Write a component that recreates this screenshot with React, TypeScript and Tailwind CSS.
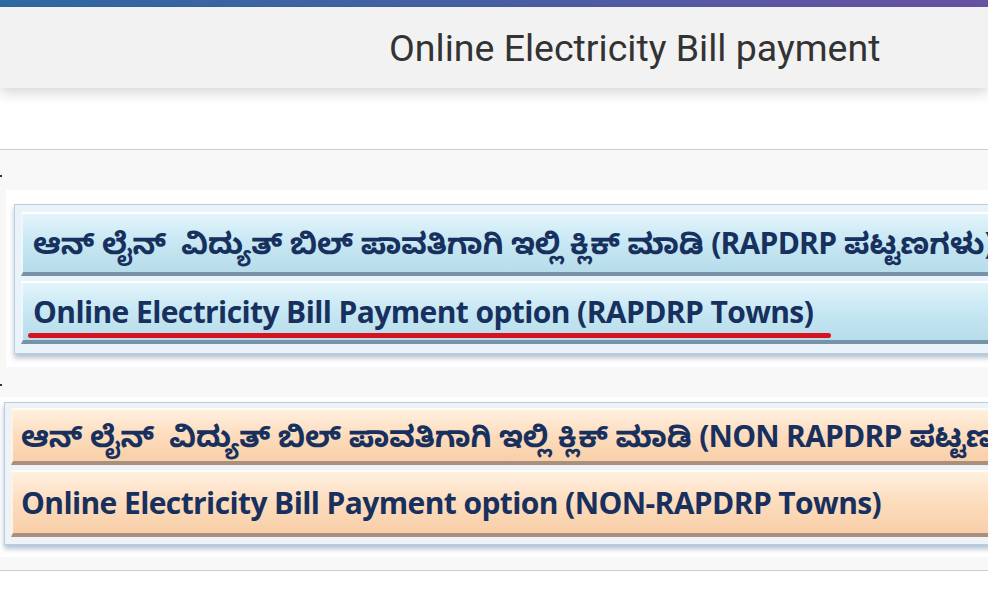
import type { ReactNode } from "react"

const FONT = { fontFamily: "'Open Sans', 'Noto Sans Kannada', 'Noto Sans', sans-serif" }

function Dot() {
  return <div className="w-[2px] h-[2px] bg-[#333]" />
}

function Banner({
  tone,
  kannada,
  english,
  underline,
}: {
  tone: "blue" | "peach"
  kannada: ReactNode
  english: string
  underline?: boolean
}) {
  const btn =
    tone === "blue"
      ? "bg-gradient-to-b from-[#e3f4fb] via-[#c6e7f3] to-[#b7dcea] border-t-2 border-l-2 border-t-white border-l-[#eef8fc] border-b-[4px] border-r-[3px] border-b-[#7693a8] border-r-[#8ba7ba]"
      : "bg-gradient-to-b from-[#fff0e0] via-[#fddcbd] to-[#f8cfa8] border-t-2 border-l-2 border-t-[#fffaf3] border-l-[#fff2e3] border-b-[4px] border-r-[3px] border-b-[#a8907c] border-r-[#b9a08c]"
  const frame =
    tone === "blue"
      ? "bg-[#eaf3f9] border border-[#b8d0e2] shadow-[0_4px_5px_rgba(90,120,150,0.45)] pt-[7px] pb-[9px] pl-[6px]"
      : "bg-[#eef3f8] border border-[#b8cde0] shadow-[0_4px_5px_rgba(90,120,150,0.45)] pt-[5px] pb-[7px] pl-[6px]"
  return (
    <div className={`flex flex-col gap-[5px] w-[1100px] ${frame}`}>
      <div className={`${btn} ${tone === "blue" ? "h-[64px] pl-[10px]" : "h-[57px] pl-[8px]"} flex items-center`}>
        <span className="text-[29.6px] font-bold text-[#17305e] whitespace-pre leading-none" style={FONT}>
          {kannada}
        </span>
      </div>
      <div
        className={`${btn} ${
          tone === "blue" ? "h-[63px] pl-[10px] justify-end pb-[2px]" : "h-[67px] pl-[8px] justify-center"
        } flex flex-col`}
      >
        <span className="text-[30px] font-bold tracking-[-0.02em] text-[#17305e] whitespace-nowrap leading-[34px]" style={FONT}>
          {english}
        </span>
        {underline && <div className="h-[5px] w-[803px] -ml-[5px] mt-[4px] rounded-full bg-[#d8131f]" />}
      </div>
    </div>
  )
}

function Latin({ children }: { children: ReactNode }) {
  return <span className="text-[30px] tracking-[-0.025em]">{children}</span>
}

export default function App() {
  return (
    <div className="w-[988px] h-[589px] overflow-hidden bg-white" style={{ fontFamily: "Roboto, sans-serif" }}>
      <div className="h-[7px] bg-gradient-to-r from-[#2f6aa0] via-[#4760a4] to-[#6a52a3]" />
      <div className="h-[81px] bg-[#f2f2f2] shadow-[0_5px_12px_rgba(0,0,0,0.16)] flex items-center pl-[389px] relative z-10">
        <h1 className="text-[37.5px] text-[#333] leading-none pt-[3px]">Online Electricity Bill payment</h1>
      </div>
      <div className="h-[61px]" />
      <div className="border-t border-b border-[#cfcfcf] bg-[#f8f8f8] h-[422px] flex flex-col">
        <div className="h-[40px] flex items-start pt-[25px]">
          <Dot />
        </div>
        <div className="ml-[6px] bg-white pt-[14px] pb-[13px] pl-[8px]">
          <Banner
            tone="blue"
            kannada={
              <>
                ಆನ್ ಲೈನ್  ವಿದ್ಯುತ್ ಬಿಲ್ ಪಾವತಿಗಾಗಿ ಇಲ್ಲಿ ಕ್ಲಿಕ್ ಮಾಡಿ <Latin>(RAPDRP</Latin> ಪಟ್ಟಣಗಳು<Latin>)</Latin>
              </>
            }
            english="Online Electricity Bill Payment option (RAPDRP Towns)"
            underline
          />
        </div>
        <div className="h-[30px] flex items-start pt-[17px]">
          <Dot />
        </div>
        <div className="bg-white pt-[5px] pb-[12px] pl-[4px]">
          <Banner
            tone="peach"
            kannada={
              <>
                ಆನ್ ಲೈನ್  ವಿದ್ಯುತ್ ಬಿಲ್ ಪಾವತಿಗಾಗಿ ಇಲ್ಲಿ ಕ್ಲಿಕ್ ಮಾಡಿ <Latin>(NON RAPDRP</Latin> ಪಟ್ಟಣಗಳು<Latin>)</Latin>
              </>
            }
            english="Online Electricity Bill Payment option (NON-RAPDRP Towns)"
          />
        </div>
      </div>
    </div>
  )
}
